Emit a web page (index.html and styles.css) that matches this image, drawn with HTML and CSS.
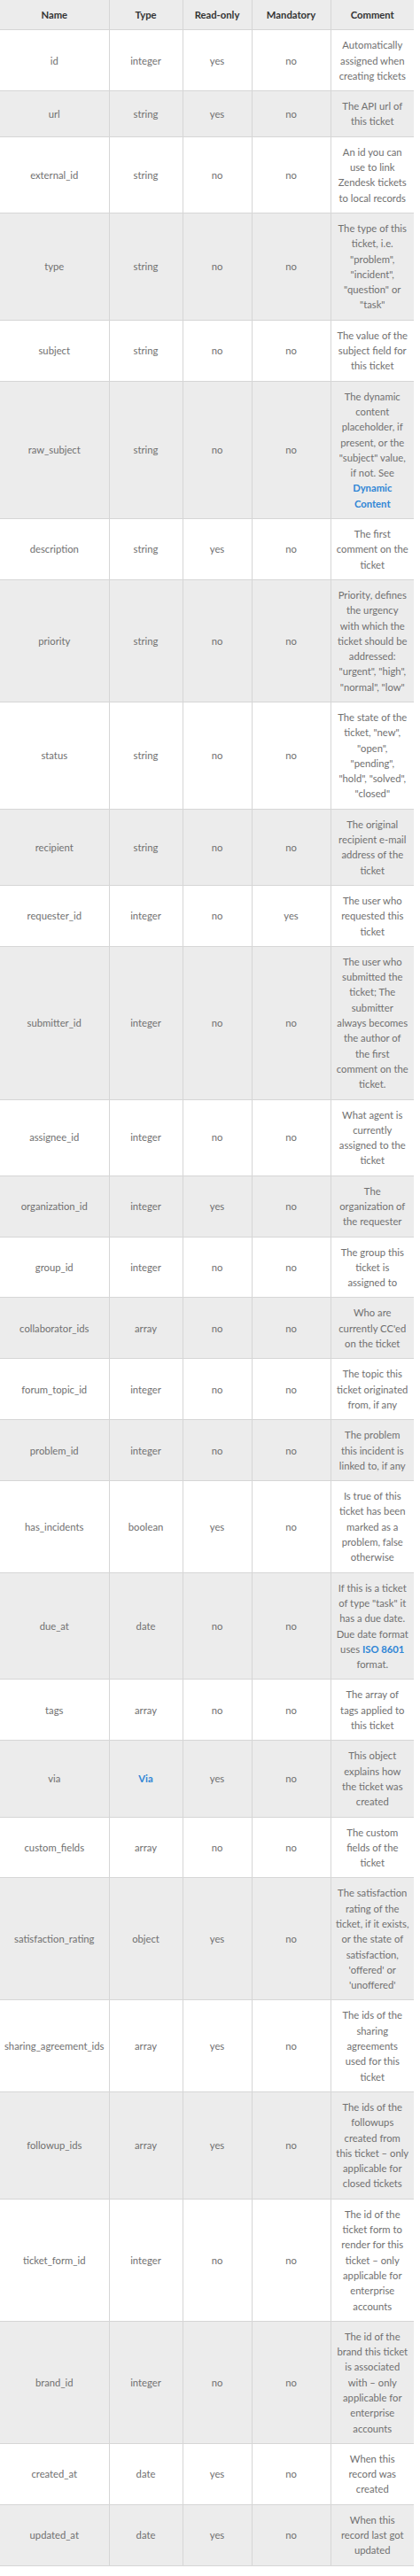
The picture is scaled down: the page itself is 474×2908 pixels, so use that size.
FILE: index.html
```html
<!DOCTYPE html>
<html>
<head>
<meta charset="utf-8">
<link rel="stylesheet" href="styles.css">
</head>
<body>
<table class="fields">
  <colgroup>
    <col class="c-name"><col class="c-type"><col class="c-ro"><col class="c-man"><col class="c-com">
  </colgroup>
  <thead>
    <tr><th>Name</th><th>Type</th><th>Read-only</th><th>Mandatory</th><th>Comment</th></tr>
  </thead>
  <tbody>
    <tr><td>id</td><td>integer</td><td>yes</td><td>no</td><td>Automatically<br>assigned when<br>creating tickets</td></tr>
    <tr><td>url</td><td>string</td><td>yes</td><td>no</td><td>The API url of<br>this ticket</td></tr>
    <tr><td>external_id</td><td>string</td><td>no</td><td>no</td><td>An id you can<br>use to link<br>Zendesk tickets<br>to local records</td></tr>
    <tr><td>type</td><td>string</td><td>no</td><td>no</td><td>The type of this<br>ticket, i.e.<br>"problem",<br>"incident",<br>"question" or<br>"task"</td></tr>
    <tr><td>subject</td><td>string</td><td>no</td><td>no</td><td>The value of the<br>subject field for<br>this ticket</td></tr>
    <tr><td>raw_subject</td><td>string</td><td>no</td><td>no</td><td>The dynamic<br>content<br>placeholder, if<br>present, or the<br>"subject" value,<br>if not. See<br><a href="#">Dynamic<br>Content</a></td></tr>
    <tr><td>description</td><td>string</td><td>yes</td><td>no</td><td>The first<br>comment on the<br>ticket</td></tr>
    <tr><td>priority</td><td>string</td><td>no</td><td>no</td><td>Priority, defines<br>the urgency<br>with which the<br>ticket should be<br>addressed:<br>"urgent", "high",<br>"normal", "low"</td></tr>
    <tr><td>status</td><td>string</td><td>no</td><td>no</td><td>The state of the<br>ticket, "new",<br>"open",<br>"pending",<br>"hold", "solved",<br>"closed"</td></tr>
    <tr><td>recipient</td><td>string</td><td>no</td><td>no</td><td>The original<br>recipient e-mail<br>address of the<br>ticket</td></tr>
    <tr><td>requester_id</td><td>integer</td><td>no</td><td>yes</td><td>The user who<br>requested this<br>ticket</td></tr>
    <tr><td>submitter_id</td><td>integer</td><td>no</td><td>no</td><td>The user who<br>submitted the<br>ticket; The<br>submitter<br>always becomes<br>the author of<br>the first<br>comment on the<br>ticket.</td></tr>
    <tr><td>assignee_id</td><td>integer</td><td>no</td><td>no</td><td>What agent is<br>currently<br>assigned to the<br>ticket</td></tr>
    <tr><td>organization_id</td><td>integer</td><td>yes</td><td>no</td><td>The<br>organization of<br>the requester</td></tr>
    <tr><td>group_id</td><td>integer</td><td>no</td><td>no</td><td>The group this<br>ticket is<br>assigned to</td></tr>
    <tr><td>collaborator_ids</td><td>array</td><td>no</td><td>no</td><td>Who are<br>currently CC'ed<br>on the ticket</td></tr>
    <tr><td>forum_topic_id</td><td>integer</td><td>no</td><td>no</td><td>The topic this<br>ticket originated<br>from, if any</td></tr>
    <tr><td>problem_id</td><td>integer</td><td>no</td><td>no</td><td>The problem<br>this incident is<br>linked to, if any</td></tr>
    <tr><td>has_incidents</td><td>boolean</td><td>yes</td><td>no</td><td>Is true of this<br>ticket has been<br>marked as a<br>problem, false<br>otherwise</td></tr>
    <tr><td>due_at</td><td>date</td><td>no</td><td>no</td><td>If this is a ticket<br>of type "task" it<br>has a due date.<br>Due date format<br>uses <a href="#">ISO 8601</a><br>format.</td></tr>
    <tr><td>tags</td><td>array</td><td>no</td><td>no</td><td>The array of<br>tags applied to<br>this ticket</td></tr>
    <tr><td>via</td><td><a href="#">Via</a></td><td>yes</td><td>no</td><td>This object<br>explains how<br>the ticket was<br>created</td></tr>
    <tr><td>custom_fields</td><td>array</td><td>no</td><td>no</td><td>The custom<br>fields of the<br>ticket</td></tr>
    <tr><td>satisfaction_rating</td><td>object</td><td>yes</td><td>no</td><td>The satisfaction<br>rating of the<br>ticket, if it exists,<br>or the state of<br>satisfaction,<br>'offered' or<br>'unoffered'</td></tr>
    <tr><td>sharing_agreement_ids</td><td>array</td><td>yes</td><td>no</td><td>The ids of the<br>sharing<br>agreements<br>used for this<br>ticket</td></tr>
    <tr><td>followup_ids</td><td>array</td><td>yes</td><td>no</td><td>The ids of the<br>followups<br>created from<br>this ticket – only<br>applicable for<br>closed tickets</td></tr>
    <tr><td>ticket_form_id</td><td>integer</td><td>no</td><td>no</td><td>The id of the<br>ticket form to<br>render for this<br>ticket – only<br>applicable for<br>enterprise<br>accounts</td></tr>
    <tr><td>brand_id</td><td>integer</td><td>no</td><td>no</td><td>The id of the<br>brand this ticket<br>is associated<br>with – only<br>applicable for<br>enterprise<br>accounts</td></tr>
    <tr><td>created_at</td><td>date</td><td>yes</td><td>no</td><td>When this<br>record was<br>created</td></tr>
    <tr><td>updated_at</td><td>date</td><td>yes</td><td>no</td><td>When this<br>record last got<br>updated</td></tr>
  </tbody>
</table>
</body>
</html>
```
FILE: styles.css
```css
html, body {
  margin: 0;
  padding: 0;
  background: #ffffff;
}

.fields {
  width: 467px;
  table-layout: fixed;
  border-collapse: collapse;
  font-family: Lato, "Open Sans", sans-serif;
  font-size: 11.25px;
  line-height: 17.3px;
  color: #707070;
}

.c-name { width: 123px; }
.c-type { width: 83px; }
.c-ro { width: 78px; }
.c-man { width: 89px; }
.c-com { width: 94px; }

.fields th,
.fields td {
  padding: 8px 4px;
  text-align: center;
  vertical-align: middle;
  border-right: 1px solid #d6d6d6;
  border-bottom: 1px solid #d6d6d6;
}

.fields th:last-child,
.fields td:last-child {
  border-right: none;
}

.fields th {
  font-weight: 700;
  color: #333333;
  background: #ececec;
}

.fields tbody tr:nth-child(even) td {
  background: #ececec;
}

.fields tbody tr:nth-child(odd) td {
  background: #ffffff;
}

.fields a {
  color: #2f86d6;
  font-weight: 700;
  text-decoration: none;
}
```
